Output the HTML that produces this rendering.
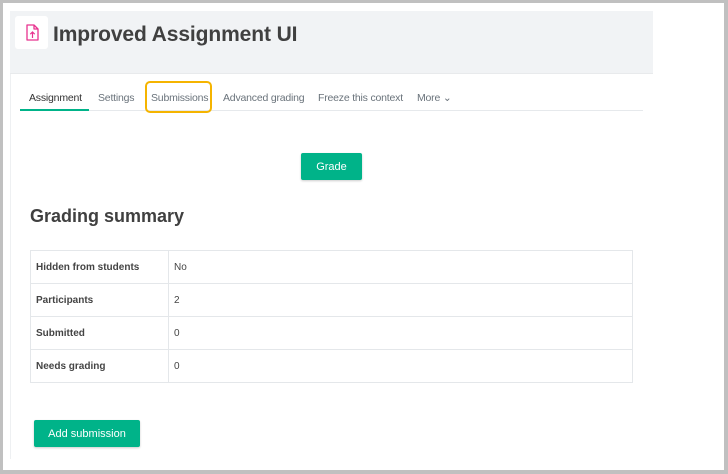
<!DOCTYPE html>
<html><head><meta charset="utf-8"><style>
*{margin:0;padding:0;box-sizing:border-box}
body{width:728px;height:474px;background:#c0c0c0;font-family:"Liberation Sans",sans-serif;position:relative;overflow:hidden}
.page{position:absolute;left:3px;top:3px;width:721px;height:467px;background:#fff}
.abs{position:absolute}
.hdr{left:7px;top:8px;width:643px;height:63px;background:#f1f3f5;border-bottom:1px solid #e8eaec}
.icon{left:12px;top:13px;width:33px;height:33px;background:#fff;border-radius:3px}
h1{position:absolute;left:50px;top:20px;font-size:21px;font-weight:bold;color:#404040;letter-spacing:-0.1px}
.tab{position:absolute;top:89px;font-size:10.5px;color:#6a737b;letter-spacing:-0.2px}
.btn{position:absolute;background:#00b389;color:#fff;font-size:11px;text-align:center;border-radius:2px;box-shadow:0 1px 2px rgba(0,0,0,.2)}
table{position:absolute;left:27px;top:247px;width:603px;border-collapse:collapse;font-size:10px;color:#444}
td{border:1px solid #e4e7ea;height:33px;padding-left:5px}
td.k{width:138px;font-weight:bold}
</style></head><body><div class="page">
<div class="abs" style="left:7px;top:71px;width:1px;height:385px;background:#eef0f2"></div>
<div class="abs hdr"></div>
<div class="abs icon"><svg width="33" height="33" viewBox="0 0 33 33"><path d="M12 9h7l4 4v11h-11z M19 9v4h4" fill="none" stroke="#e8338f" stroke-width="1.3" stroke-linejoin="round"/><path d="M17.5 22v-6 M15.3 18.2l2.2-2.2 2.2 2.2" fill="none" stroke="#e8338f" stroke-width="1.2"/></svg></div>
<h1>Improved Assignment UI</h1>
<div class="tab" style="left:26px;color:#333">Assignment</div>
<div class="tab" style="left:95px">Settings</div>
<div class="tab" style="left:148px">Submissions</div>
<div class="tab" style="left:220px">Advanced grading</div>
<div class="tab" style="left:315px">Freeze this context</div>
<div class="tab" style="left:414px">More ⌄</div>
<div class="abs" style="left:17px;top:107px;width:623px;height:1px;background:#e6e9ec"></div>
<div class="abs" style="left:17px;top:106px;width:69px;height:2px;background:#00b389"></div>
<div class="abs" style="left:142px;top:78px;width:67px;height:32px;border:2px solid #f5b400;border-radius:5px"></div>
<div class="btn" style="left:298px;top:150px;width:61px;height:27px;line-height:28px">Grade</div>
<div class="abs" style="left:27px;top:203px;font-size:18px;font-weight:bold;color:#404040">Grading summary</div>
<table>
<tr><td class="k">Hidden from students</td><td>No</td></tr>
<tr><td class="k">Participants</td><td>2</td></tr>
<tr><td class="k">Submitted</td><td>0</td></tr>
<tr><td class="k">Needs grading</td><td>0</td></tr>
</table>
<div class="btn" style="left:31px;top:417px;width:106px;height:27px;line-height:29px">Add submission</div>
</div></body></html>
